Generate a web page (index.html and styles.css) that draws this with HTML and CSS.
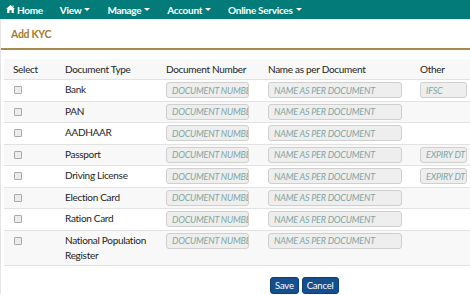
FILE: index.html
```html
<!DOCTYPE html>
<html lang="en">
<head>
    <meta charset="UTF-8">
    <title>Add KYC</title>
    <link rel="stylesheet" href="styles.css">
</head>
<body>
    <nav class="navbar">
        <a class="nav-item" href="#">
            <svg class="home-icon" viewBox="0 0 10 9" width="9" height="8"><path d="M5 0 L10 4.6 L8.8 4.6 L8.8 9 L6.2 9 L6.2 6 L3.8 6 L3.8 9 L1.2 9 L1.2 4.6 L0 4.6 Z M7.2 0.6 L8.4 0.6 L8.4 2.6 L7.2 1.6 Z" fill="#fff"/></svg>Home
        </a>
        <a class="nav-item" href="#">View <span class="caret"></span></a>
        <a class="nav-item" href="#">Manage <span class="caret"></span></a>
        <a class="nav-item" href="#">Account <span class="caret"></span></a>
        <a class="nav-item" href="#">Online Services <span class="caret"></span></a>
    </nav>

    <div class="panel">
        <div class="panel-heading">Add KYC</div>
        <div class="panel-body">
            <table class="kyc-table">
                <thead>
                    <tr>
                        <th class="c-select">Select</th>
                        <th class="c-type">Document Type</th>
                        <th class="c-num">Document Number</th>
                        <th class="c-name">Name as per Document</th>
                        <th class="c-other">Other</th>
                    </tr>
                </thead>
                <tbody>
                    <tr>
                        <td><input type="checkbox"></td>
                        <td>Bank</td>
                        <td><input class="field f-num" placeholder="Document Number"></td>
                        <td><input class="field f-name" placeholder="Name as per Document"></td>
                        <td><input class="field f-other" placeholder="IFSC"></td>
                    </tr>
                    <tr>
                        <td><input type="checkbox"></td>
                        <td>PAN</td>
                        <td><input class="field f-num" placeholder="Document Number"></td>
                        <td><input class="field f-name" placeholder="Name as per Document"></td>
                        <td></td>
                    </tr>
                    <tr>
                        <td><input type="checkbox"></td>
                        <td>AADHAAR</td>
                        <td><input class="field f-num" placeholder="Document Number"></td>
                        <td><input class="field f-name" placeholder="Name as per Document"></td>
                        <td></td>
                    </tr>
                    <tr>
                        <td><input type="checkbox"></td>
                        <td>Passport</td>
                        <td><input class="field f-num" placeholder="Document Number"></td>
                        <td><input class="field f-name" placeholder="Name as per Document"></td>
                        <td><input class="field f-other" placeholder="Expiry Dt"></td>
                    </tr>
                    <tr>
                        <td><input type="checkbox"></td>
                        <td>Driving License</td>
                        <td><input class="field f-num" placeholder="Document Number"></td>
                        <td><input class="field f-name" placeholder="Name as per Document"></td>
                        <td><input class="field f-other" placeholder="Expiry Dt"></td>
                    </tr>
                    <tr>
                        <td><input type="checkbox"></td>
                        <td>Election Card</td>
                        <td><input class="field f-num" placeholder="Document Number"></td>
                        <td><input class="field f-name" placeholder="Name as per Document"></td>
                        <td></td>
                    </tr>
                    <tr>
                        <td><input type="checkbox"></td>
                        <td>Ration Card</td>
                        <td><input class="field f-num" placeholder="Document Number"></td>
                        <td><input class="field f-name" placeholder="Name as per Document"></td>
                        <td></td>
                    </tr>
                    <tr>
                        <td><input type="checkbox"></td>
                        <td>National Population Register</td>
                        <td><input class="field f-num" placeholder="Document Number"></td>
                        <td><input class="field f-name" placeholder="Name as per Document"></td>
                        <td></td>
                    </tr>
                </tbody>
            </table>

            <div class="actions">
                <button class="btn">Save</button>
                <button class="btn">Cancel</button>
            </div>
        </div>
    </div>
</body>
</html>
```

FILE: styles.css
```css
body {
    margin: 0;
    font-family: 'Lato', 'Open Sans', sans-serif;
    font-size: 10px;
    letter-spacing: -0.3px;
    color: #222;
    background: #fff;
    overflow: hidden;
}
.navbar {
    display: flex;
    height: 19px;
    align-items: center;
    background: #037b78;
    padding-left: 6px;
}
.nav-item {
    display: flex;
    align-items: center;
    color: #fff;
    font-weight: bold;
    font-size: 10px;
    text-decoration: none;
    margin-right: 17px;
}
.home-icon {
    margin-right: 2px;
    margin-top: -1px;
}
.caret {
    display: inline-block;
    width: 0;
    height: 0;
    margin-left: 3px;
    border-top: 3px solid #fff;
    border-left: 3px solid transparent;
    border-right: 3px solid transparent;
}
.panel {
    border-left: 1px solid #e4e4e4;
}
.panel-heading {
    height: 29px;
    line-height: 31px;
    padding-left: 10px;
    color: #a47b2f;
    font-weight: bold;
    font-size: 10.5px;
    border-bottom: 2px solid #a8884c;
}
.panel-body {
    padding: 9px 0 0 3px;
}
.kyc-table {
    width: 480px;
    border-collapse: collapse;
    table-layout: fixed;
}
.kyc-table th,
.kyc-table td {
    text-align: left;
    vertical-align: top;
    padding: 2px 0 2.5px 9px;
    line-height: 15px;
    border-bottom: 1px solid #e2e2e2;
}
.kyc-table th {
    font-weight: normal;
    white-space: nowrap;
    padding-top: 3px;
    padding-bottom: 2px;
}
.kyc-table thead tr,
.kyc-table tbody tr:nth-child(even) {
    background: #f8f8f8;
}
.c-select { width: 43px; }
.c-type { width: 92px; }
.c-num { width: 93px; }
.c-name { width: 143px; }
input[type="checkbox"] {
    -webkit-appearance: none;
    appearance: none;
    width: 8px;
    height: 8px;
    margin: 4px 0 0 1px;
    border: 1px solid #a9a9a9;
    border-radius: 1px;
    background: #ececec;
    display: block;
}
.field {
    display: block;
    box-sizing: border-box;
    height: 16px;
    margin-top: 0;
    padding: 0 0 0 5px;
    border: 1px solid #cfcfcf;
    border-radius: 3px;
    background: #eeeeee;
    font-family: 'Lato', sans-serif;
    font-size: 9px;
    letter-spacing: -0.2px;
    font-style: italic;
    text-overflow: clip;
}
.field::placeholder {
    color: #82a5a3;
    text-transform: uppercase;
    font-style: italic;
}
.f-num { width: 83px; }
.f-name { width: 134px; }
.f-other { width: 47px; }
.actions {
    padding: 11px 0 0 266px;
    display: flex;
    gap: 3px;
}
.btn {
    height: 17px;
    padding: 0 4px;
    border: 1px solid #0c3f76;
    border-radius: 3px;
    background: #164f8d;
    color: #fff;
    font-family: 'Lato', sans-serif;
    font-size: 9.5px;
    letter-spacing: -0.2px;
}
```
